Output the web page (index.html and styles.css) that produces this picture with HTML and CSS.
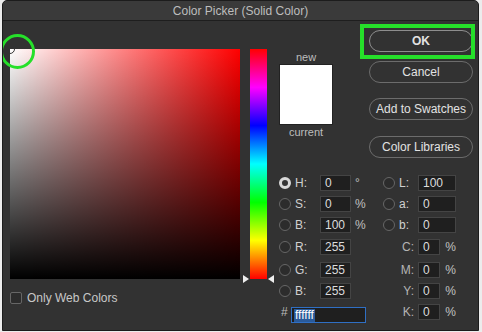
FILE: index.html
```html
<!DOCTYPE html>
<html lang="en">
<head>
  <meta charset="UTF-8">
  <meta name="viewport" content="width=device-width, initial-scale=1.0">
  <title>Color Picker (Solid Color)</title>
  <link rel="stylesheet" href="styles.css">
</head>
<body>
  <div class="window">
    <div class="titlebar">Color Picker (Solid Color)</div>
    <div class="content">
      <div class="picker">
        <div class="field">
          <div class="field-marker"></div>
        </div>
        <label class="webonly">
          <span class="checkbox"></span>
          <span>Only Web Colors</span>
        </label>
      </div>
      <div class="hue">
        <span class="hue-arrow hue-arrow-left"></span>
        <span class="hue-arrow hue-arrow-right"></span>
      </div>
      <div class="side">
        <div class="top">
          <div class="preview">
            <div class="preview-label">new</div>
            <div class="swatch"></div>
            <div class="preview-label">current</div>
          </div>
          <div class="buttons">
            <div class="btn btn-default">OK</div>
            <div class="btn btn-cancel">Cancel</div>
            <div class="btn btn-swatches">Add to Swatches</div>
            <div class="btn btn-libraries">Color Libraries</div>
          </div>
        </div>
        <div class="fields">
          <!-- HSB / Lab -->
          <span class="radio radio-on"></span><span class="lbl">H:</span><div class="inp">0</div><span class="unit">°</span>
          <span class="radio"></span><span class="lbl">L:</span><div class="inp">100</div><span></span>

          <span class="radio"></span><span class="lbl">S:</span><div class="inp">0</div><span class="unit">%</span>
          <span class="radio"></span><span class="lbl">a:</span><div class="inp">0</div><span></span>

          <span class="radio"></span><span class="lbl">B:</span><div class="inp">100</div><span class="unit">%</span>
          <span class="radio"></span><span class="lbl">b:</span><div class="inp">0</div><span></span>

          <!-- RGB / CMYK -->
          <span class="radio"></span><span class="lbl">R:</span><div class="inp">255</div><span></span>
          <span></span><span class="lbl lbl-right">C:</span><div class="cmyk"><div class="inp">0</div><span class="unit">%</span></div><span></span>

          <span class="radio"></span><span class="lbl">G:</span><div class="inp">255</div><span></span>
          <span></span><span class="lbl lbl-right">M:</span><div class="cmyk"><div class="inp">0</div><span class="unit">%</span></div><span></span>

          <span class="radio"></span><span class="lbl">B:</span><div class="inp">255</div><span></span>
          <span></span><span class="lbl lbl-right">Y:</span><div class="cmyk"><div class="inp">0</div><span class="unit">%</span></div><span></span>

          <span class="hash">#</span><div class="inp hex"><span class="sel">ffffff</span></div>
          <span></span><span class="lbl lbl-right">K:</span><div class="cmyk"><div class="inp">0</div><span class="unit">%</span></div><span></span>
        </div>
      </div>
    </div>
    <!-- annotation marks -->
    <div class="mark-circle"></div>
    <div class="mark-box"></div>
  </div>
</body>
</html>
```

FILE: styles.css
```css
html, body {
  margin: 0;
  padding: 0;
}
body {
  background: #ececec;
  font-family: "Liberation Sans", Arial, sans-serif;
  font-size: 12px;
  color: #cfcfcf;
}
.window {
  position: relative;
  box-sizing: border-box;
  margin-left: 2px;
  width: 477px;
  height: 331px;
  background: #323232;
  border: 1px solid #1c1c1c;
  border-radius: 5px 5px 0 0;
  overflow: hidden;
}
.titlebar {
  height: 19px;
  line-height: 20px;
  text-align: center;
  background: #3a3a3a;
  border-bottom: 1px solid #1e1e1e;
  color: #bdbdbd;
  font-size: 12px;
}
.content {
  display: flex;
  padding: 9px 0 0 7px;
}
.picker {
  margin-top: 19px;
  width: 230px;
}
.field {
  position: relative;
  overflow: hidden;
  width: 230px;
  height: 230px;
  background:
    linear-gradient(to bottom, rgba(0, 0, 0, 0), #000),
    linear-gradient(to right, #fff, #f00);
}
.field-marker {
  position: absolute;
  left: -5px;
  top: -5px;
  width: 8px;
  height: 8px;
  border: 1px solid #333;
  border-radius: 50%;
}
.webonly {
  display: flex;
  align-items: center;
  gap: 5px;
  margin-top: 12px;
  color: #c8c8c8;
}
.checkbox {
  box-sizing: border-box;
  width: 12px;
  height: 12px;
  border: 1px solid #666;
  border-radius: 2px;
  background: #2c2c2c;
}
.hue {
  position: relative;
  margin-top: 19px;
  margin-left: 10px;
  width: 17px;
  height: 230px;
  background: linear-gradient(to bottom, #f00, #f0f 16.7%, #00f 33.3%, #0ff 50%, #0f0 66.7%, #ff0 83.3%, #f00);
}
.hue-arrow {
  position: absolute;
  bottom: -4px;
  width: 0;
  height: 0;
  border-top: 4px solid transparent;
  border-bottom: 4px solid transparent;
}
.hue-arrow-left {
  left: -7px;
  border-left: 6px solid #eee;
}
.hue-arrow-right {
  right: -7px;
  border-right: 6px solid #eee;
}
.side {
  margin-left: 11px;
  flex: 1;
}
.top {
  display: flex;
  justify-content: space-between;
}
.preview {
  margin-top: 20px;
  margin-left: 1px;
  width: 54px;
  text-align: center;
}
.preview-label {
  height: 14px;
  line-height: 14px;
  color: #bdbdbd;
  font-size: 11px;
}
.swatch {
  box-sizing: border-box;
  height: 61px;
  background: #fff;
  border: 1px solid #222;
}
.buttons {
  display: flex;
  flex-direction: column;
  width: 104px;
  margin-right: 5px;
}
.btn {
  box-sizing: border-box;
  height: 22px;
  line-height: 20px;
  border: 1px solid #6c6c6c;
  border-radius: 11px;
  text-align: center;
  color: #e2e2e2;
}
.btn-default {
  border-color: #8e8e8e;
  font-weight: bold;
}
.btn-cancel { margin-top: 9px; }
.btn-swatches { margin-top: 15px; }
.btn-libraries { margin-top: 16px; }
.fields {
  display: grid;
  grid-template-columns: 13px 29px 31px 32px 12px 23px 38px 1fr;
  grid-template-rows: 21px 21px 21px 24px 21px 21px 21px;
  align-items: center;
  margin-top: 14px;
}
.radio {
  box-sizing: border-box;
  justify-self: center;
  width: 12px;
  height: 12px;
  border: 1px solid #666;
  border-radius: 50%;
  background: #2c2c2c;
}
.radio-on {
  border: 3px solid #d8d8d8;
  background: #333;
}
.lbl {
  padding-left: 4px;
  color: #d0d0d0;
}
.lbl-right {
  padding: 0 4px 0 0;
  text-align: right;
  color: #b5b5b5;
}
.inp {
  box-sizing: border-box;
  height: 16px;
  line-height: 14px;
  padding-left: 4px;
  background: #1f1f1f;
  border: 1px solid #444;
  color: #dcdcdc;
  font-size: 12px;
}
.unit {
  padding-left: 4px;
  color: #c0c0c0;
}
.cmyk {
  display: flex;
  align-items: center;
}
.cmyk .inp {
  width: 30px;
}
.cmyk .unit {
  padding-left: 5px;
}
.hash {
  padding-left: 3px;
  color: #bdbdbd;
}
.inp.hex {
  grid-column: 2 / 5;
  width: 75px;
  margin-top: 6px;
  padding-left: 2px;
  border-color: #2f6fc4;
}
.sel {
  display: inline-block;
  height: 13px;
  line-height: 13px;
  padding: 0 1px;
  background: #2a5a9a;
  color: #fff;
}
.mark-circle {
  position: absolute;
  left: -3px;
  top: 33px;
  width: 29px;
  height: 29px;
  border: 3px solid #26e02a;
  border-radius: 50%;
}
.mark-box {
  position: absolute;
  left: 357px;
  top: 23px;
  width: 107px;
  height: 27px;
  border: 4px solid #26e02a;
}
```
